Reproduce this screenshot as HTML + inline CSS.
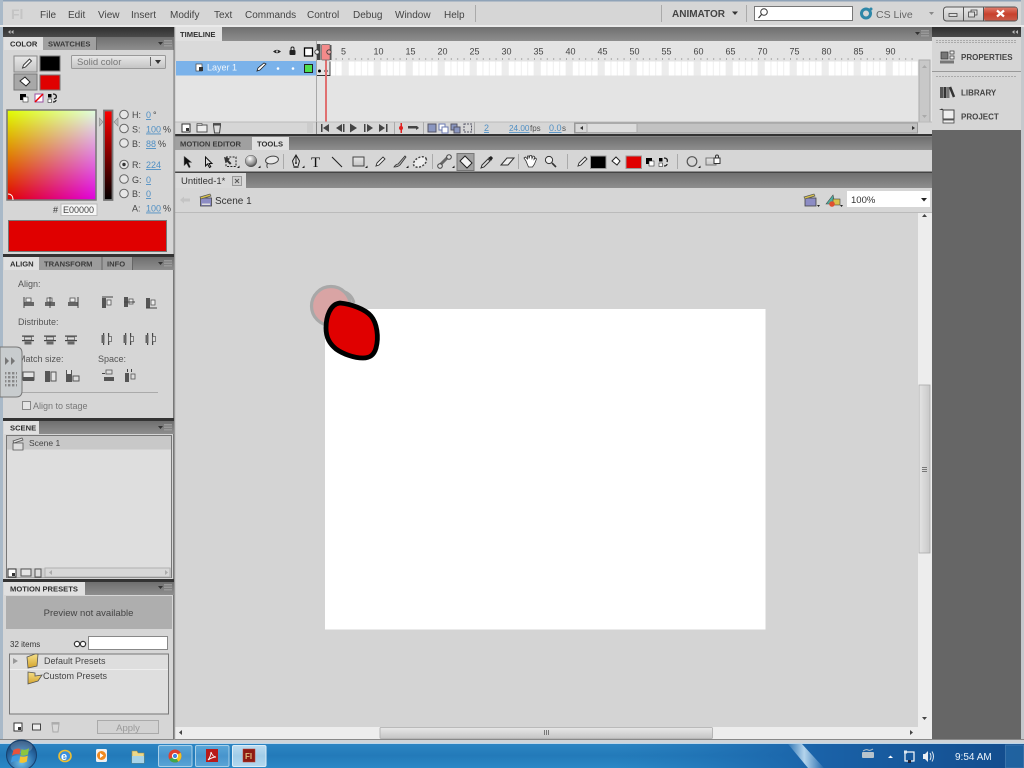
<!DOCTYPE html>
<html><head><meta charset="utf-8"><title>Flash</title>
<style>
html,body{margin:0;padding:0;background:#d6d6d6;width:1024px;height:768px;overflow:hidden}
svg{display:block;position:absolute;left:0;top:0;filter:blur(.35px)}
text{font-family:"Liberation Sans",sans-serif;font-size:9px;fill:#444}
.m{font-size:10px;fill:#444}
.t{font-size:7.6px;font-weight:bold;fill:#2e2e2e}
.d{font-size:7.6px;font-weight:bold;fill:#3a3a3a}
.l{font-size:9px;fill:#555}
.v{font-size:9px;fill:#4f8fc4;text-decoration:underline}
.r{font-size:9px;fill:#444;text-anchor:middle}
.p{font-size:8px;font-weight:bold;fill:#444}
</style></head><body>
<svg width="1024" height="768" viewBox="0 0 1024 768" xmlns="http://www.w3.org/2000/svg">
<defs>
<linearGradient id="hd" x1="0" y1="0" x2="0" y2="1"><stop offset="0" stop-color="#6f6f6f"/><stop offset="1" stop-color="#8e8e8e"/></linearGradient>
<linearGradient id="dk" x1="0" y1="0" x2="0" y2="1"><stop offset="0" stop-color="#2f2f2f"/><stop offset="1" stop-color="#4a4a4a"/></linearGradient>
<linearGradient id="tb" x1="0" y1="0" x2="0" y2="1"><stop offset="0" stop-color="#2d86c4"/><stop offset=".5" stop-color="#237ab9"/><stop offset="1" stop-color="#2a88c6"/></linearGradient>
<linearGradient id="tb2" x1="0" y1="0" x2="1" y2="0"><stop offset="0" stop-color="#2a84c2" stop-opacity="0"/><stop offset=".6" stop-color="#1f70b4" stop-opacity="0"/><stop offset=".8" stop-color="#1a62a8"/><stop offset="1" stop-color="#134c8c"/></linearGradient>
<linearGradient id="streak" x1="0" y1="0" x2="1" y2="0"><stop offset="0" stop-color="#cfe8f8" stop-opacity=".1"/><stop offset=".45" stop-color="#cfe8f8" stop-opacity=".85"/><stop offset="1" stop-color="#cfe8f8" stop-opacity=".05"/></linearGradient>
<linearGradient id="btn" x1="0" y1="0" x2="0" y2="1"><stop offset="0" stop-color="#e8e8e8"/><stop offset="1" stop-color="#c4c4c4"/></linearGradient>
<linearGradient id="thumbV" x1="0" y1="0" x2="1" y2="0"><stop offset="0" stop-color="#e4e4e4"/><stop offset="1" stop-color="#c8c8c8"/></linearGradient>
<linearGradient id="close" x1="0" y1="0" x2="0" y2="1"><stop offset="0" stop-color="#e07c6c"/><stop offset=".5" stop-color="#c8402c"/><stop offset="1" stop-color="#c85a48"/></linearGradient>
<linearGradient id="slide" x1="0" y1="0" x2="0" y2="1"><stop offset="0" stop-color="#ff0000"/><stop offset="1" stop-color="#000"/></linearGradient>
<linearGradient id="pB" x1="0" y1="0" x2="1" y2="0"><stop offset="0" stop-color="#000"/><stop offset="1" stop-color="#0000e0"/></linearGradient>
<linearGradient id="pG" x1="0" y1="1" x2="0" y2="0"><stop offset="0" stop-color="#000"/><stop offset="1" stop-color="#00ff00"/></linearGradient>
<radialGradient id="orb" cx=".5" cy=".75" r=".8"><stop offset="0" stop-color="#6fc0e8"/><stop offset=".55" stop-color="#2a6ca8"/><stop offset="1" stop-color="#12345e"/></radialGradient>
<radialGradient id="ball" cx=".4" cy=".3" r=".75"><stop offset="0" stop-color="#fff"/><stop offset=".7" stop-color="#888"/><stop offset="1" stop-color="#333"/></radialGradient>
<linearGradient id="fold" x1="0" y1="0" x2="0" y2="1"><stop offset="0" stop-color="#f5e08a"/><stop offset="1" stop-color="#d4a42c"/></linearGradient>
<linearGradient id="taskb" x1="0" y1="0" x2="0" y2="1"><stop offset="0" stop-color="#5aa6d8"/><stop offset=".5" stop-color="#4794cc"/><stop offset="1" stop-color="#5aa4d6"/></linearGradient>
<linearGradient id="taskc" x1="0" y1="0" x2="0" y2="1"><stop offset="0" stop-color="#bcdcf0"/><stop offset=".5" stop-color="#a0cce8"/><stop offset="1" stop-color="#b4d8ee"/></linearGradient>
<pattern id="cells" x="342" y="0" width="32" height="20" patternUnits="userSpaceOnUse">
<rect width="32" height="20" fill="#fff"/>
<rect x="0" width="6.4" height="20" fill="#ececec"/>
<rect x="6" width="1" height="20" fill="#f0f0f0"/><rect x="12.400" width="1" height="20" fill="#f0f0f0"/><rect x="18.800" width="1" height="20" fill="#f0f0f0"/><rect x="25.200" width="1" height="20" fill="#f0f0f0"/><rect x="31.500" width="1" height="20" fill="#f0f0f0"/>
</pattern>
<pattern id="ticks" x="342" y="58" width="6.4" height="4" patternUnits="userSpaceOnUse"><rect width="1" height="2" fill="#aaa"/></pattern>
<pattern id="grip" width="3" height="2" patternUnits="userSpaceOnUse"><rect width="2" height="1" fill="#aaa"/></pattern>
<pattern id="dots" width="4" height="4" patternUnits="userSpaceOnUse"><rect width="2.4" height="2.4" fill="#888"/></pattern>
<g id="menuic"><path d="M-8 -2l5 0-2.500 3z" fill="#333"/><rect x="-2" y="-4" width="8" height="1.500" fill="#999"/><rect x="-2" y="-1.500" width="8" height="1.500" fill="#999"/><rect x="-2" y="1" width="8" height="1.500" fill="#999"/></g>
<g id="newl"><rect x="-4" y="-4" width="8" height="8" fill="#fff" stroke="#333"/><rect x="0" y="0" width="3" height="3" fill="#333"/></g>
<g id="fold1"><rect x="-5" y="-3" width="10" height="7" fill="#eee" stroke="#555"/><rect x="-5" y="-4.500" width="5" height="2" fill="#ccc" stroke="#555" stroke-width=".7"/></g>
<g id="trash"><path d="M-3.500 -3h7l-1 8h-5z" fill="#ddd" stroke="#444"/><rect x="-4" y="-5" width="8" height="1.500" fill="#555"/></g>
<g id="rad"><circle r="4.300" fill="#e6e6e6" stroke="#666"/></g>
<g id="ai"><rect x="-5" y="-1" width="10" height="4" fill="#666"/><rect x="-3" y="-5" width="5" height="4" fill="#eee" stroke="#555" stroke-width=".8"/></g>
<g id="aiv"><rect x="-5" y="-5" width="4" height="10" fill="#555"/><rect x="0" y="-3" width="4" height="5" fill="#eee" stroke="#555" stroke-width=".8"/></g>
<g id="dh"><rect x="-6" y="-3.500" width="12" height="1.200" fill="#444"/><rect x="-6" y="1" width="12" height="1.200" fill="#444"/><rect x="-3.500" y="-2" width="7" height="3" fill="#ddd" stroke="#555" stroke-width=".7"/><rect x="-3.500" y="2.500" width="7" height="3" fill="#666"/></g>
<g id="dv"><rect x="-4" y="-6" width="1.200" height="12" fill="#444"/><rect x="1" y="-6" width="1.200" height="12" fill="#444"/><rect x="-5.500" y="-4" width="3" height="8" fill="#666"/><rect x="1.500" y="-2.500" width="3" height="5" fill="#ddd" stroke="#555" stroke-width=".7"/></g>
<g id="pen"><path d="M-3 4l1-3 6-6 2 2-6 6z" fill="#f4f4f4" stroke="#333" stroke-width=".9"/></g>
<path id="tri" d="M0 0h2.500v-2.500z" fill="#222"/>
</defs>

<!-- base -->
<rect width="1024" height="768" fill="#d6d6d6"/>
<rect width="1024" height="1.500" fill="#8fa3b8"/>
<rect x="0" y="0" width="3" height="743" fill="#a9b9c8"/>
<rect x="1021" y="0" width="3" height="743" fill="#c4c8cc"/>
<rect x="0" y="25" width="1024" height="2" fill="#eaeaea"/>

<!-- menu -->
<text x="11" y="19" style="font-size:14px;font-weight:bold;fill:#c4c4c4">Fl</text>
<text class="m" x="40" y="18">File</text><text class="m" x="68" y="18">Edit</text><text class="m" x="98" y="18">View</text><text class="m" x="131" y="18">Insert</text><text class="m" x="170" y="18">Modify</text><text class="m" x="214" y="18">Text</text><text class="m" x="245" y="18">Commands</text><text class="m" x="307" y="18">Control</text><text class="m" x="353" y="18">Debug</text><text class="m" x="395" y="18">Window</text><text class="m" x="444" y="18">Help</text>
<rect x="475" y="5" width="1" height="17" fill="#aaa"/>
<rect x="661" y="5" width="1" height="17" fill="#aaa"/>
<text x="672" y="17" style="font-size:10px;font-weight:bold;fill:#444">ANIMATOR</text>
<path d="M732 11.500h6l-3 3.500z" fill="#333"/>
<rect x="746" y="5" width="1" height="17" fill="#aaa"/>
<rect x="754.500" y="6.500" width="98" height="14" fill="#fff" stroke="#777"/>
<circle cx="764" cy="12" r="3.300" fill="none" stroke="#333"/><path d="M761.500 14.500l-3 3.500" stroke="#333" stroke-width="1.200"/>
<circle cx="866" cy="13.500" r="4.500" fill="none" stroke="#2e87a8" stroke-width="3"/><circle cx="871" cy="9" r="1.500" fill="#2e87a8"/>
<text x="876" y="18" style="font-size:10.500px;fill:#666">CS Live</text>
<path d="M929 12h5l-2.500 3z" fill="#888"/>
<rect x="943.500" y="7" width="74" height="14" rx="3" fill="url(#btn)" stroke="#555"/>
<rect x="984" y="7.500" width="33" height="13" rx="2" fill="url(#close)"/>
<rect x="963" y="7" width="1" height="14" fill="#555"/><rect x="983" y="7" width="1" height="14" fill="#555"/>
<rect x="949" y="13.500" width="8" height="3" fill="#ddd" stroke="#444" stroke-width=".8"/>
<rect x="971" y="10" width="6" height="5" fill="#ddd" stroke="#444" stroke-width=".8"/><rect x="968.500" y="12" width="6" height="5" fill="#ddd" stroke="#444" stroke-width=".8"/>
<path d="M997 10.500l7 6m0-6l-7 6" stroke="#fff" stroke-width="2.200"/>

<!-- left column -->
<rect x="3" y="27" width="171" height="716" fill="#d6d6d6"/>
<rect x="3" y="27" width="171" height="10" fill="url(#dk)"/>
<path d="M8 32l2.500-2v4zM11 32l2.500-2v4z" fill="#bbb"/>
<rect x="4" y="37" width="170" height="13" fill="url(#hd)"/>
<rect x="43" y="37" width="53" height="13" fill="#a0a0a0"/><rect x="96" y="37" width="1" height="13" fill="#666"/>
<rect x="4" y="37" width="39" height="13" fill="#e0e0e0"/>
<text class="t" x="10" y="46.500">COLOR</text><text class="d" x="48" y="46.500">SWATCHES</text>
<use href="#menuic" x="166" y="44"/>
<rect x="173" y="37" width="2" height="706" fill="#777"/>
<rect x="3.500" y="50" width="170" height="204" fill="#d6d6d6"/>
<rect x="14" y="56" width="23" height="16" fill="url(#btn)" stroke="#888"/><use href="#pen" x="25.500" y="64"/>
<rect x="40" y="56" width="20" height="15" fill="#000" stroke="#777"/>
<rect x="14" y="74" width="23" height="16" fill="#a8a8a8" stroke="#777"/>
<path d="M20 81l5-4 5 5-4 4z" fill="#fff" stroke="#222"/>
<rect x="40" y="75" width="20" height="15" fill="#e00000" stroke="#777"/>
<rect x="71.500" y="55.500" width="94" height="13" rx="1" fill="url(#btn)" stroke="#999"/>
<text x="77" y="65" style="font-size:9.500px;fill:#777">Solid color</text>
<rect x="150" y="57" width="1" height="9" fill="#666"/><path d="M155 60h6l-3 4z" fill="#333"/>
<rect x="20" y="94" width="6" height="6" fill="#000"/><rect x="23" y="97" width="5" height="5" fill="#fff" stroke="#333" stroke-width=".6"/>
<rect x="35" y="94" width="8" height="8" fill="#fff" stroke="#9a50a0"/><path d="M35 102l8-8" stroke="#e00" stroke-width="1.500"/>
<rect x="48" y="94" width="3.500" height="3.500" fill="#000"/><rect x="48" y="99" width="3.500" height="3.500" fill="#fff" stroke="#333" stroke-width=".6"/><path d="M53 94c3 0 4 2 3 4l-2 1M53 102c2 0 3-1 3-2" fill="none" stroke="#222" stroke-width="1.300"/>
<g style="isolation:isolate">
<rect x="7" y="110" width="89" height="90" fill="#e00000"/>
<rect x="7" y="110" width="89" height="90" fill="url(#pB)" style="mix-blend-mode:screen"/>
<rect x="7" y="110" width="89" height="90" fill="url(#pG)" style="mix-blend-mode:screen"/>
</g>
<rect x="7" y="110" width="89" height="90" fill="none" stroke="#777" stroke-width="1.500"/>
<path d="M8 194c3 0 5 2 5 6" fill="none" stroke="#fff"/>
<rect x="104" y="110.500" width="8.500" height="89.500" fill="url(#slide)" stroke="#777" stroke-width="1.800"/>
<path d="M99.500 118v8l3.500-4z" fill="#bbb" stroke="#888" stroke-width=".6"/><path d="M118 118v8l-4-4z" fill="#bbb" stroke="#888" stroke-width=".6"/>
<use href="#rad" x="124" y="114.500"/><use href="#rad" x="124" y="128.500"/><use href="#rad" x="124" y="143"/><use href="#rad" x="124" y="164.500"/><circle cx="124" cy="164.500" r="1.700" fill="#333"/><use href="#rad" x="124" y="179"/><use href="#rad" x="124" y="193.500"/>
<g class="l"><text x="132" y="118">H:</text><text x="132" y="132.500">S:</text><text x="132" y="147">B:</text><text x="132" y="168">R:</text><text x="132" y="183">G:</text><text x="132" y="197">B:</text><text x="132" y="211.500">A:</text></g>
<text class="v" x="146" y="118">0</text><text x="153" y="118">°</text>
<text class="v" x="146" y="132.500">100</text><text x="163" y="132.500">%</text>
<text class="v" x="146" y="147">88</text><text x="158" y="147">%</text>
<text class="v" x="146" y="168">224</text><text class="v" x="146" y="183">0</text><text class="v" x="146" y="197">0</text>
<text class="v" x="146" y="211.500">100</text><text x="163" y="211.500">%</text>
<text x="53" y="213" style="font-size:9px;fill:#333">#</text>
<rect x="61" y="204" width="36" height="11.500" fill="#f6f6f6" stroke="#bbb"/>
<text x="63" y="213" style="font-size:9px;fill:#444">E00000</text>
<rect x="8.500" y="220.500" width="158" height="31" fill="#e00000" stroke="#777"/>

<rect x="3" y="254" width="171" height="3" fill="#333"/>
<rect x="4" y="257" width="170" height="13" fill="url(#hd)"/>
<rect x="39" y="257" width="93" height="13" fill="#9c9c9c"/><rect x="101.500" y="257" width="1" height="13" fill="#666"/><rect x="132" y="257" width="1" height="13" fill="#666"/>
<rect x="4" y="257" width="35" height="13" fill="#e0e0e0"/>
<text class="t" x="10" y="266.500">ALIGN</text><text class="d" x="44" y="266.500">TRANSFORM</text><text class="d" x="107" y="266.500">INFO</text>
<use href="#menuic" x="166" y="264"/>
<text class="l" x="18" y="287">Align:</text>
<use href="#ai" x="29" y="303"/><rect x="23.500" y="297" width="1" height="11" fill="#444"/>
<use href="#ai" x="50" y="303"/><rect x="49.500" y="297" width="1" height="11" fill="#444"/>
<use href="#ai" x="73" y="303"/><rect x="77.500" y="297" width="1" height="11" fill="#444"/>
<use href="#aiv" x="107" y="303"/><rect x="102" y="296.500" width="11" height="1" fill="#444"/>
<use href="#aiv" x="129" y="302"/><rect x="124" y="301.500" width="11" height="1" fill="#444"/>
<use href="#aiv" x="151" y="303"/><rect x="146" y="307.500" width="11" height="1" fill="#444"/>
<text class="l" x="18" y="325">Distribute:</text>
<use href="#dh" x="28" y="339"/><use href="#dh" x="50" y="339"/><use href="#dh" x="71" y="339"/>
<use href="#dv" x="107" y="339"/><use href="#dv" x="129" y="339"/><use href="#dv" x="151" y="339"/>
<text class="l" x="18" y="362">Match size:</text><text class="l" x="98" y="362">Space:</text>
<rect x="23" y="372" width="11" height="8" fill="#e4e4e4" stroke="#555"/><rect x="23" y="377" width="11" height="4" fill="#555"/>
<rect x="45" y="371" width="5" height="11" fill="#555"/><rect x="51" y="372" width="5" height="9" fill="#e4e4e4" stroke="#555"/>
<rect x="66" y="370" width="6" height="12" fill="#555"/><rect x="67" y="370" width="4" height="4" fill="#e4e4e4"/><rect x="73" y="376" width="6" height="5" fill="#ddd" stroke="#555"/>
<rect x="106" y="370" width="6" height="4" fill="#ddd" stroke="#555" stroke-width=".8"/><rect x="104" y="377" width="10" height="4" fill="#555"/><rect x="102" y="373" width="3" height="1" fill="#444"/>
<rect x="125" y="373" width="4" height="9" fill="#555"/><rect x="131" y="374" width="4" height="5" fill="#ddd" stroke="#555" stroke-width=".8"/><rect x="127" y="369" width="1" height="3" fill="#444"/><rect x="131" y="369" width="1" height="3" fill="#444"/>
<rect x="22" y="392" width="136" height="1" fill="#aaa"/>
<rect x="22.500" y="401.500" width="8" height="8" fill="#e4e4e4" stroke="#888"/>
<text x="33" y="409" style="font-size:9px;fill:#777">Align to stage</text>
<path d="M0 347h16q6 0 6 6v38q0 6-6 6h-16z" fill="#c8ccce" stroke="#777"/>
<path d="M5 357l4 4-4 4zM11 357l4 4-4 4z" fill="#777"/>
<rect x="5" y="372" width="12" height="16" fill="url(#dots)"/>

<rect x="3" y="418" width="171" height="3" fill="#333"/>
<rect x="4" y="421" width="170" height="13" fill="url(#hd)"/>
<rect x="4" y="421" width="35" height="13" fill="#e0e0e0"/>
<text class="t" x="10" y="430.500">SCENE</text>
<use href="#menuic" x="166" y="428"/>
<rect x="6.500" y="435.500" width="165" height="142" fill="#dedede" stroke="#777"/>
<rect x="7" y="436" width="164" height="13.500" fill="#c8c8c8"/>
<path d="M13 443h10v7h-10zM13 441l9-3 1 2-9 3z" fill="#ddd" stroke="#555" stroke-width=".8"/>
<text x="29" y="446" style="font-size:8.500px;fill:#444">Scene 1</text>
<rect x="7" y="568" width="164" height="9.500" fill="#d0d0d0"/>
<rect x="45" y="568" width="125" height="9" fill="#d8d8d8" stroke="#b0b0b0"/>
<path d="M52 570l-3 2.500 3 2.500zM165 570l3 2.500-3 2.500z" fill="#aaa"/>
<use href="#newl" x="12" y="573"/>
<rect x="21" y="569" width="10" height="7" fill="#e4e4e4" stroke="#555"/><rect x="35" y="569" width="6" height="8" fill="#ddd" stroke="#555"/>

<rect x="3" y="579" width="171" height="3" fill="#333"/>
<rect x="4" y="582" width="170" height="13" fill="url(#hd)"/>
<rect x="4" y="582" width="81" height="13" fill="#e0e0e0"/>
<text class="t" x="10" y="591.500">MOTION PRESETS</text>
<use href="#menuic" x="166" y="588"/>
<rect x="6" y="596" width="166" height="33" fill="#aeaeae"/>
<text x="88.500" y="616" style="font-size:9.500px;fill:#444;text-anchor:middle">Preview not available</text>
<text x="10" y="647" style="font-size:8px;fill:#333">32 items</text>
<circle cx="77" cy="644" r="2.600" fill="#fff" stroke="#333" stroke-width="1.200"/><circle cx="83" cy="644" r="2.600" fill="#fff" stroke="#333" stroke-width="1.200"/>
<rect x="88.500" y="636.500" width="79" height="13" fill="#fff" stroke="#888"/>
<rect x="9.500" y="654" width="159" height="60" fill="#dedede" stroke="#777"/>
<rect x="10" y="669" width="158" height="1" fill="#eee"/>
<path d="M13 658l5 3-5 3z" fill="#999"/>
<path d="M27 657l8-3 3 0-1 12-9 2z" fill="url(#fold)" stroke="#555" stroke-width=".8"/>
<text x="44" y="664" style="font-size:9px;fill:#444">Default Presets</text>
<path d="M28 672l7 1 0 3 7-1-4 6-10 3z" fill="url(#fold)" stroke="#555" stroke-width=".8"/>
<text x="43" y="679" style="font-size:9px;fill:#444">Custom Presets</text>
<use href="#newl" x="18" y="727"/><g transform="translate(36.500,727)"><rect x="-4" y="-3" width="8" height="6" fill="#eee" stroke="#444"/></g><g transform="translate(55.500,727)" opacity=".3"><use href="#trash"/></g>
<rect x="97.500" y="720.500" width="61" height="13" fill="#d2d2d2" stroke="#aaa"/>
<text x="128" y="731" style="font-size:9.500px;fill:#999;text-anchor:middle">Apply</text>
<rect x="0" y="739" width="1024" height="1" fill="#888"/>
<rect x="0" y="740" width="1024" height="3" fill="#d0d4d8"/>

<!-- timeline -->
<rect x="175" y="27" width="757" height="14" fill="url(#hd)"/>
<rect x="175" y="27" width="47" height="14" fill="#e0e0e0"/>
<text class="t" x="180" y="37">TIMELINE</text>
<use href="#menuic" x="923" y="34"/>
<rect x="175" y="41" width="757" height="93" fill="#e4e4e4"/>
<rect x="175" y="41" width="141" height="20" fill="#dadada"/>
<rect x="316" y="41" width="602" height="20" fill="#e4e4e4"/>
<path d="M273 51.500q4-3.500 8 0q-4 3.500-8 0z" fill="#222"/><circle cx="277" cy="51.500" r="1.200" fill="#bbb"/>
<rect x="289.500" y="50" width="6" height="5" rx="1" fill="#222"/><path d="M291 50v-1.500a1.500 1.500 0 0 1 3 0v1.500" fill="none" stroke="#222"/>
<rect x="304.500" y="48" width="8" height="8" fill="#fff" stroke="#000" stroke-width="1.300"/>
<rect x="334" y="58" width="584" height="2" fill="url(#ticks)"/>
<g style="font-size:9px">
<text class="r" x="343.500" y="54.500">5</text><text class="r" x="378.500" y="54.500">10</text><text class="r" x="410.500" y="54.500">15</text><text class="r" x="442.500" y="54.500">20</text><text class="r" x="474.500" y="54.500">25</text><text class="r" x="506.500" y="54.500">30</text><text class="r" x="538.500" y="54.500">35</text><text class="r" x="570.500" y="54.500">40</text><text class="r" x="602.500" y="54.500">45</text><text class="r" x="634.500" y="54.500">50</text><text class="r" x="666.500" y="54.500">55</text><text class="r" x="698.500" y="54.500">60</text><text class="r" x="730.500" y="54.500">65</text><text class="r" x="762.500" y="54.500">70</text><text class="r" x="794.500" y="54.500">75</text><text class="r" x="826.500" y="54.500">80</text><text class="r" x="858.500" y="54.500">85</text><text class="r" x="890.500" y="54.500">90</text>
</g>
<rect x="176" y="61" width="140" height="14.500" fill="#7ab2ea"/>
<rect x="196" y="64" width="6" height="7" fill="#fff" stroke="#444" stroke-width=".7"/><rect x="199" y="67" width="4" height="4" fill="#333"/>
<text x="207" y="70.500" style="font-size:9px;fill:#eef5fc">Layer 1</text>
<path d="M257 71l1-3 6-5 2 1-6 6z" fill="#fff" stroke="#222" stroke-width=".8"/>
<circle cx="278" cy="68.500" r="1.300" fill="#fff"/><circle cx="293" cy="68.500" r="1.300" fill="#fff"/>
<rect x="304.500" y="64.500" width="8" height="8" fill="#4ee04e" stroke="#222"/>
<rect x="316" y="61.500" width="602" height="14" fill="url(#cells)"/>
<rect x="317" y="61.500" width="13" height="14" fill="#e4e4e4"/>
<path d="M317 75.500h13v-14" fill="none" stroke="#333" stroke-width=".9"/>
<circle cx="319.500" cy="71" r="1.500" fill="#000"/><circle cx="326" cy="71" r="1.500" fill="#000"/>
<rect x="316" y="41" width="1" height="81" fill="#a8a8a8"/>
<rect x="325" y="60" width="2" height="62" fill="#e07070"/>
<rect x="321.500" y="44.500" width="8.500" height="15.500" rx="1" fill="#f48a8a" stroke="#666" stroke-width=".7"/>
<rect x="317" y="44" width="3.500" height="16" fill="#444"/><rect x="330" y="45" width="1.500" height="15" fill="#555"/>
<circle cx="317" cy="52" r="2.200" fill="#eee" stroke="#333" stroke-width=".8"/><circle cx="329" cy="52" r="2.200" fill="#e8a0a0" stroke="#333" stroke-width=".8"/>
<rect x="919" y="60" width="11" height="62" fill="#c8c8c8" stroke="#aaa"/>
<path d="M922 68l2.500-3 2.500 3zM922 115l2.500 3 2.500-3z" fill="#aaa"/>
<rect x="175" y="122" width="757" height="12" fill="#d6d6d6"/><rect x="175" y="121.500" width="757" height="1" fill="#bbb"/>
<use href="#newl" x="186" y="128"/><use href="#fold1" x="202" y="128"/><use href="#trash" x="217" y="128"/>
<rect x="307" y="123" width="6" height="10" fill="#ccc"/>
<rect x="316" y="122" width="1" height="12" fill="#888"/>
<g fill="#444"><rect x="321" y="124" width="1.500" height="8"/><path d="M329 124v8l-6-4z"/><path d="M342 124v8l-6-4z"/><rect x="343" y="124" width="1.500" height="8"/><path d="M350 123.500v9l7-4.500z"/><rect x="364" y="124" width="1.500" height="8"/><path d="M367 124v8l6-4z"/><path d="M379 124v8l6-4z"/><rect x="386" y="124" width="1.500" height="8"/></g>
<rect x="394" y="122" width="1" height="12" fill="#aaa"/>
<rect x="400.500" y="123" width="1.500" height="10" fill="#e02020"/><circle cx="401" cy="128" r="2" fill="#e02020"/>
<path d="M408 126h9l2 2-3 2v-1.500h-8z" fill="#444"/>
<rect x="423" y="122" width="1" height="12" fill="#aaa"/>
<rect x="428" y="124" width="8" height="8" fill="#8a96c0" stroke="#556"/><rect x="439" y="124" width="6" height="6" fill="#fff" stroke="#6a78b0"/><rect x="442" y="127" width="6" height="6" fill="#fff" stroke="#6a78b0"/><rect x="451" y="124" width="6" height="6" fill="#8a96c0" stroke="#556"/><rect x="454" y="127" width="6" height="6" fill="#8a96c0" stroke="#556"/><rect x="464" y="124" width="7.500" height="8" fill="none" stroke="#556" stroke-dasharray="2 1"/>
<rect x="474" y="122" width="1" height="12" fill="#aaa"/>
<text class="v" x="484" y="131">2</text><text class="v" x="509" y="131" style="font-size:8.200px">24.00</text><text x="530" y="131" style="font-size:8px;fill:#555">fps</text><text class="v" x="549" y="131">0.0</text><text x="562" y="131" style="font-size:8px;fill:#555">s</text>
<rect x="574.500" y="123" width="343" height="10" fill="#c2c2c2" stroke="#999"/>
<rect x="575" y="123.500" width="12" height="9" fill="#d8d8d8" stroke="#999"/>
<path d="M583 126v4l-3-2z" fill="#333"/>
<rect x="587" y="123.500" width="50" height="9" fill="#dcdcdc" stroke="#aaa"/>
<path d="M912 126v4l3-2z" fill="#333"/>

<rect x="174" y="134" width="758" height="2.500" fill="#333"/>
<!-- tools tabs -->
<rect x="175" y="137" width="757" height="13" fill="url(#hd)"/>
<rect x="175" y="137" width="77" height="13" fill="#a0a0a0"/>
<rect x="252" y="137" width="37" height="13" fill="#e0e0e0"/>
<text class="d" x="180" y="146.500">MOTION EDITOR</text><text class="t" x="257" y="146.500">TOOLS</text>
<rect x="175" y="150" width="757" height="22" fill="#d6d6d6"/>
<rect x="175" y="171.500" width="757" height="1.500" fill="#444"/>
<path d="M184 156v10l2.500-2.500 2.500 4.500 1.500-1-2-4.500h3.500z" fill="#111" stroke="#888" stroke-width=".5"/>
<path d="M205.500 157v9l2-2 2 3.500 1.300-.8-1.800-3.200h3z" fill="#ddd" stroke="#111" stroke-width="1"/>
<rect x="226" y="157" width="10" height="9.500" fill="none" stroke="#222" stroke-dasharray="2 1.300"/><path d="M224 157l6 1.500-1.500 1.800 3 3-1.500 1.500-3-3-1.500 1.500z" fill="#333"/>
<circle cx="251" cy="161" r="5.800" fill="url(#ball)" stroke="#555" stroke-width=".5"/>
<ellipse cx="272" cy="160" rx="6.500" ry="3.800" fill="#e8e8e8" stroke="#444" transform="rotate(-10 272 160)"/><path d="M268 163q-2 2-.5 5" fill="none" stroke="#444"/>
<use href="#tri" x="237" y="168"/><use href="#tri" x="258" y="168"/><use href="#tri" x="302" y="168"/><use href="#tri" x="365" y="168"/><use href="#tri" x="406" y="168"/><use href="#tri" x="452" y="168"/><use href="#tri" x="471" y="168"/>
<rect x="283" y="154" width="1" height="15" fill="#aaa"/>
<path d="M296 155l3.500 6-1.500 5.500h-4l-1.500-5.500z" fill="#ddd" stroke="#222"/><rect x="295.500" y="156" width="1" height="6" fill="#222"/><circle cx="296" cy="163" r="1" fill="#222"/><rect x="293.500" y="166" width="5" height="2" fill="#555"/>
<text x="311" y="167" style="font-family:'Liberation Serif',serif;font-size:15px;fill:#111">T</text>
<path d="M332 157l10 10" stroke="#222" stroke-width="1.100"/>
<rect x="353" y="157" width="11" height="9" fill="url(#btn)" stroke="#444"/>
<use href="#pen" x="379" y="162"/>
<path d="M394 167q2-3 4-3l7-8 1 1-6 8q-2 2-6 2z" fill="#aaa" stroke="#333" stroke-width=".8"/>
<ellipse cx="420" cy="162" rx="7" ry="4.500" fill="#eee" stroke="#444" stroke-dasharray="2 1.500" stroke-width="1.500" transform="rotate(-30 420 162)"/>
<rect x="432" y="154" width="1" height="15" fill="#aaa"/>
<path d="M439 166l9-9" stroke="#666" stroke-width="3"/><circle cx="449" cy="157" r="2.300" fill="#ddd" stroke="#444"/><circle cx="440" cy="166" r="2.300" fill="#ddd" stroke="#444"/>
<rect x="457" y="153.500" width="17" height="17" fill="#a2a2a2" stroke="#777"/>
<path d="M460 161l5-5 7 7-5 5z" fill="#f4f4f4" stroke="#222"/>
<path d="M481 168l1-3 6-6 2 2-6 6z" fill="#ddd" stroke="#333"/><path d="M488 158l3-2 2 2-2 3z" fill="#222"/>
<path d="M501 165l6-7h7l-6 7z" fill="#eee" stroke="#333"/>
<rect x="518" y="154" width="1" height="15" fill="#aaa"/>
<path d="M526 161l-2-3 1.500-1 2 2v-3h1.500v2.500l1-3h1.500l.5 3 1-2.500 1.500.5-.5 3 1.500-1.500 1 1-2 5-2 3h-4z" fill="#fff" stroke="#333" stroke-width=".8"/>
<circle cx="549" cy="160" r="3.600" fill="#eee" stroke="#333"/><path d="M552 163l4 4" stroke="#333" stroke-width="1.600"/>
<rect x="567" y="154" width="1" height="15" fill="#aaa"/>
<use href="#pen" x="581" y="162"/>
<rect x="590.500" y="156" width="15.500" height="12.500" fill="#000" stroke="#999"/>
<path d="M612 161l4-4 4 4-3 4z" fill="#fff" stroke="#222"/>
<rect x="626" y="156" width="15.500" height="12.500" fill="#e00000" stroke="#999"/>
<rect x="646" y="158" width="6" height="6" fill="#000"/><rect x="649" y="161" width="5" height="5" fill="#fff" stroke="#333" stroke-width=".6"/>
<rect x="659" y="158" width="3.500" height="3.500" fill="#000"/><rect x="659" y="163" width="3.500" height="3.500" fill="#fff" stroke="#333" stroke-width=".6"/><path d="M664 158c3 0 4 2 3 4M664 166c2 0 3-1 3-2" fill="none" stroke="#222" stroke-width="1.300"/>
<rect x="677" y="154" width="1" height="15" fill="#aaa"/>
<circle cx="692" cy="161.500" r="4.800" fill="#d6d6d6" stroke="#555" stroke-width="1.200"/><use href="#tri" x="698" y="168"/>
<rect x="706" y="158" width="10" height="7" fill="url(#btn)" stroke="#777"/>
<rect x="714" y="158" width="6" height="5.500" fill="#fff" stroke="#333"/><path d="M715.500 158v-1.500a1.500 1.500 0 0 1 3 0v1.500" fill="none" stroke="#333"/>

<!-- doc tab -->
<rect x="174" y="173" width="758" height="15" fill="url(#hd)"/>
<rect x="175" y="173" width="71" height="15" fill="#d9d9d9"/>
<text x="181" y="184" style="font-size:9.500px;fill:#333">Untitled-1*</text>
<rect x="232.500" y="176.500" width="9" height="9" fill="#d0d0d0" stroke="#999"/><path d="M235 179l4 4m0-4l-4 4" stroke="#555"/>
<rect x="174" y="188" width="758" height="24" fill="#d6d6d6"/>
<rect x="174" y="212" width="758" height="1" fill="#bbb"/>
<path d="M180 200l4-3.500v2h6v3h-6v2z" fill="#c4c4c4"/>
<rect x="200.500" y="198" width="11" height="8" fill="#8c8cc4" stroke="#444" stroke-width=".8"/><path d="M200 197l10-3 1 2-10 3z" fill="#d8c24c" stroke="#555" stroke-width=".7"/><rect x="202" y="203.500" width="8" height="1.500" fill="#ddd"/>
<text x="215" y="204" style="font-size:10px;fill:#333">Scene 1</text>
<rect x="805" y="198" width="11" height="8" fill="#8c8cc4" stroke="#444" stroke-width=".8"/><path d="M804 197l10-3 1 2-10 3z" fill="#d8c24c" stroke="#555" stroke-width=".7"/><path d="M817 205h3l-1.500 2z" fill="#222"/>
<path d="M826 204l7-9 2 9z" fill="#4cb0a0" stroke="#444" stroke-width=".6"/><rect x="833" y="199" width="7" height="6" fill="#d8c24c" stroke="#444" stroke-width=".6"/><circle cx="832" cy="204" r="2.800" fill="#e05030"/><path d="M840 205h3l-1.500 2z" fill="#222"/>
<rect x="847" y="191" width="83" height="16" fill="#fff"/>
<text x="851" y="203" style="font-size:9.500px;fill:#333">100%</text>
<path d="M921 198h6l-3 3.500z" fill="#222"/>

<!-- stage -->
<rect x="174" y="213" width="744" height="514" fill="#d4d4d4"/>
<rect x="325" y="309" width="440.500" height="320.500" fill="#fff"/>
<path d="M345 292Q352 295 354 303" fill="none" stroke="#a8a8a8" stroke-width="3"/>
<circle cx="331" cy="306" r="19.500" fill="#d9a4a4" stroke="#a8a8a8" stroke-width="3.200"/>
<path d="M340 303C351 304 365 309 371 316C377 323 379 337 376 348C374 355 370 358 363 358C354 358 343 354 336 349C330 344 326 338 326 328C326 317 330 304 340 303Z" fill="#e00000" stroke="#000" stroke-width="4.800"/>
<rect x="918" y="213" width="14" height="514" fill="#ededed"/>
<path d="M922 217h5l-2.500-3z" fill="#444"/><path d="M922 717h5l-2.500 3z" fill="#444"/>
<rect x="919" y="385" width="11" height="168" fill="url(#thumbV)" stroke="#aaa" stroke-width=".8"/>
<rect x="922" y="467" width="5" height="1" fill="#777"/><rect x="922" y="469" width="5" height="1" fill="#777"/><rect x="922" y="471" width="5" height="1" fill="#777"/>
<rect x="174" y="727" width="758" height="12" fill="#ededed"/>
<path d="M182 730v5l-3-2.500z" fill="#444"/><path d="M910 730v5l3-2.500z" fill="#444"/>
<rect x="380" y="727.500" width="332.500" height="11" rx="1" fill="url(#btn)" stroke="#aaa" stroke-width=".8"/>
<rect x="544" y="730" width="1" height="5" fill="#777"/><rect x="546" y="730" width="1" height="5" fill="#777"/><rect x="548" y="730" width="1" height="5" fill="#777"/>
<rect x="174" y="27" width="1.200" height="713" fill="#999"/>

<!-- right column -->
<rect x="932" y="27" width="89" height="712" fill="#666"/>
<rect x="932" y="27" width="89" height="10" fill="url(#dk)"/>
<path d="M1012 32l2.500-2v4zM1015.500 32l2.500-2v4z" fill="#bbb"/>
<rect x="932" y="37" width="89" height="34" fill="#d6d6d6"/>
<rect x="932" y="71" width="89" height="1" fill="#999"/>
<rect x="932" y="72" width="89" height="58" fill="#d6d6d6"/>
<rect x="936" y="40" width="81" height="3" fill="url(#grip)"/><rect x="936" y="75" width="81" height="3" fill="url(#grip)"/>
<rect x="941" y="52" width="7" height="7" fill="#777" stroke="#333" stroke-width=".7"/><rect x="950" y="51" width="4" height="3" fill="#eee" stroke="#333" stroke-width=".7"/><rect x="950" y="56" width="4" height="3" fill="#eee" stroke="#333" stroke-width=".7"/><rect x="940" y="60.500" width="14" height="3" fill="#777"/>
<text class="p" x="961" y="60">PROPERTIES</text>
<rect x="940" y="87" width="3" height="11" fill="#555"/><rect x="943.500" y="87" width="3" height="11" fill="#333"/><rect x="947" y="87" width="2.500" height="11" fill="#777"/><path d="M950 87l4 10" stroke="#333" stroke-width="2.500"/>
<text class="p" x="961" y="95.500">LIBRARY</text>
<path d="M939 110h5l-2-1.500z" fill="#333"/><rect x="943" y="110" width="11" height="9" fill="#eee" stroke="#444"/><rect x="943" y="120" width="11" height="3" fill="#eee" stroke="#444" stroke-width=".8"/>
<text class="p" x="961" y="119.500">PROJECT</text>

<!-- taskbar -->
<rect x="0" y="743" width="1024" height="25" fill="url(#tb)"/>
<rect x="0" y="743" width="1024" height="25" fill="url(#tb2)"/>
<rect x="0" y="743" width="1024" height="1" fill="#bcd6ea"/>
<path d="M788 744h14l22 24h-16z" fill="url(#streak)"/>
<circle cx="21.500" cy="755" r="15" fill="url(#orb)" stroke="#16406e"/>
<ellipse cx="21.500" cy="747" rx="11" ry="6" fill="#fff" opacity=".18"/>
<path d="M13.500 750q3.500-2.500 7-1l-1 5.500q-3.500-1.500-7.500 1z" fill="#e8533c"/>
<path d="M21.500 749.300q3.500 1.500 7.500-1l-1 6.200q-4 2-7.500.8z" fill="#8cc63f"/>
<path d="M12 756.700q3.500-2 7.300-.8l-1 5.700q-3.500-1.300-7.500 1z" fill="#3f9ae0"/>
<path d="M20.300 756.200q3.500 1.300 7.500-.6l-1 6q-4 2-7.500.8z" fill="#f6c430"/>
<ellipse cx="65" cy="756" rx="6" ry="5.500" fill="#3a8ede" stroke="#f0c030" stroke-width="1.600"/><text x="61" y="760" style="font-size:11px;font-weight:bold;fill:#fff">e</text>
<rect x="96" y="749" width="11" height="13" rx="1.500" fill="#f0f0f0"/><circle cx="101.500" cy="755.500" r="4.500" fill="#f08a20"/><path d="M100 753v5l3.500-2.500z" fill="#fff"/>
<path d="M132 751h5l1 2h6v10h-12z" fill="#ecd98a" stroke="#a89040" stroke-width=".6"/><rect x="132" y="756" width="12" height="7" fill="#a8d4e8"/>
<g fill="url(#taskb)" stroke="#a8d0e8" stroke-width="1"><rect x="158.500" y="745.500" width="33.500" height="21" rx="1.500"/><rect x="195.500" y="745.500" width="33.500" height="21" rx="1.500"/></g>
<rect x="232.500" y="745.500" width="33.500" height="21" rx="1.500" fill="url(#taskc)" stroke="#dcedf7"/>
<circle cx="175" cy="756" r="6.500" fill="#e04030"/><path d="M175 756l5.600-3.200a6.500 6.500 0 0 1-2.400 8.800z" fill="#f2c420"/><path d="M175 756l3.200 5.600a6.500 6.500 0 0 1-9-2.400z" fill="#3fa84a"/><circle cx="175" cy="756" r="2.600" fill="#3f86e0" stroke="#fff"/>
<rect x="206" y="749" width="12" height="13" fill="#b81a1a"/><path d="M208 760c2-2 3-6 3-8 1 3 3 5 5 5-2 0-5 1-8 3z" fill="none" stroke="#fff" stroke-width=".9"/>
<rect x="243" y="749" width="12" height="13" fill="#8e1c14" stroke="#c04030" stroke-width=".5"/><text x="245" y="759" style="font-size:8px;font-weight:bold;fill:#e0c080">Fl</text>
<rect x="862" y="752" width="12" height="6" rx="1" fill="#b8c4cc"/><path d="M863 751q3-2 5-1t5-1" fill="none" stroke="#b8c4cc"/>
<path d="M888 758l2.500-2.500 2.500 2.500z" fill="#fff"/>
<rect x="905" y="752" width="9" height="9" fill="none" stroke="#fff" stroke-width="1.200"/><rect x="904" y="750.500" width="3" height="3" fill="#dfe8f0"/><rect x="908" y="760" width="3" height="3" fill="#223"/>
<path d="M923 754h2l3-3v11l-3-3h-2z" fill="#e8eef4"/><path d="M930 753q2 3.500 0 7M932 751.500q3 5 0 10" fill="none" stroke="#dfe8f0"/>
<text x="955" y="760" style="font-size:10px;fill:#eef4fa">9:54 AM</text>
<rect x="1005.500" y="745" width="18" height="23" fill="#2a70ac" opacity=".6" stroke="#6ea0cc" stroke-width=".7"/>
</svg>
</body></html>
